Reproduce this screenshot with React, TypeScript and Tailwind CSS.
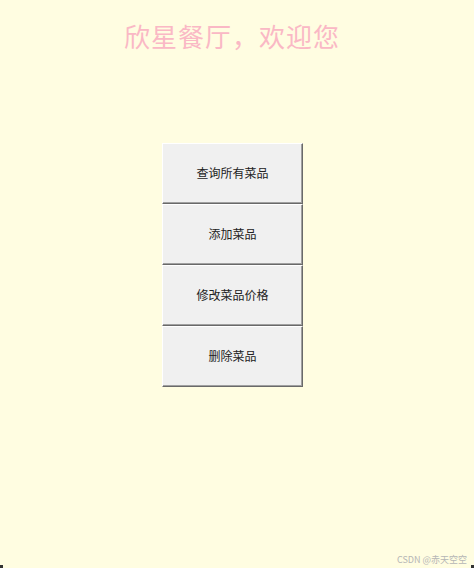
import React from "react";

const items = ["查询所有菜品", "添加菜品", "修改菜品价格", "删除菜品"];

export default function App() {
  return (
    <div
      className="relative h-[568px] w-full overflow-hidden bg-[#fffde1]"
      style={{ fontFamily: '"Noto Sans CJK SC", "Noto Sans", sans-serif' }}
    >
      <h1 className="pt-[23px] pr-[10px] text-center text-[26px] leading-[26px] font-normal tracking-[1px] text-[#fab8c5] font-['Noto_Sans_CJK_SC',serif]">
        欣星餐厅，欢迎您
      </h1>

      <div className="ml-[162px] mt-[94px] flex w-[141px] flex-col">
        {items.map((label) => (
          <button
            key={label}
            className="flex h-[61px] w-full items-center justify-center border-t border-l border-r border-b border-t-white border-l-white border-r-[#696969] border-b-[#696969] bg-[#f0f0f0] pb-[2px] text-[12px] text-[#222] shadow-[inset_-1px_-1px_0_#a0a0a0]"
          >
            {label}
          </button>
        ))}
      </div>

      <span className="absolute right-[7px] bottom-[2px] text-[9px] leading-[12px] text-[#b5b5b5]">
        CSDN @赤天空空
      </span>
      <div className="absolute bottom-0 left-0 h-[3px] w-[3px] bg-[#333]" />
      <div className="absolute right-0 bottom-0 h-[3px] w-[3px] bg-[#333]" />
    </div>
  );
}
